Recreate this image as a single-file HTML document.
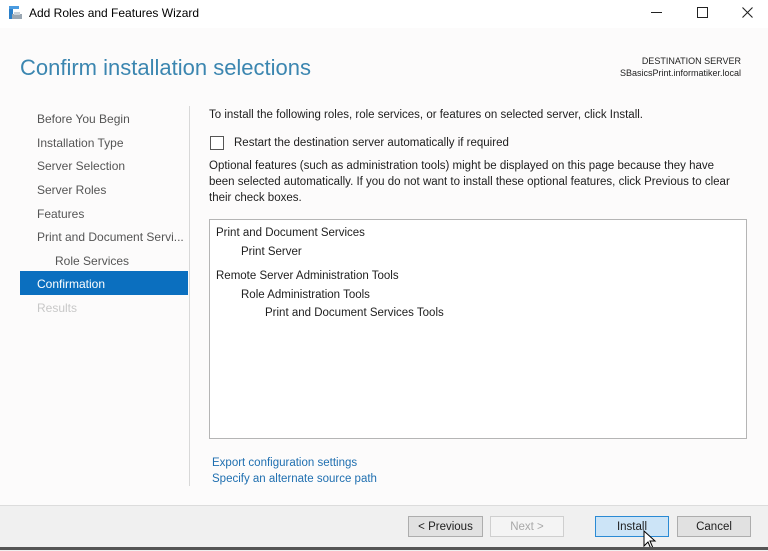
<!DOCTYPE html>
<html><head><style>
body{margin:0;width:768px;height:550px;overflow:hidden;background:#fcfbfb;font-family:"Liberation Sans",sans-serif;font-size:11.5px;color:#1e1e1e;position:relative}
.a{position:absolute;white-space:nowrap}
.nav{position:absolute;left:37px;color:#555;font-size:12px}
</style></head><body>
<div class="a" style="left:0;top:0;width:768px;height:28px;background:#fff"></div>
<svg class="a" style="left:7px;top:5px" width="16" height="16" viewBox="0 0 16 16"><rect x="2" y="1" width="4" height="13" fill="#2a7fc9"/><rect x="2" y="1" width="10" height="3" fill="#4a9be0"/><rect x="5" y="9" width="10" height="5" fill="#9aa7b3"/><rect x="7" y="7" width="6" height="3" fill="#c7d0d8"/></svg>
<div class="a" style="left:29px;top:6px;font-size:12px;color:#000">Add Roles and Features Wizard</div>
<div class="a" style="left:651px;top:12px;width:11px;height:1px;background:#222"></div>
<div class="a" style="left:697px;top:7px;width:9px;height:9px;border:1px solid #222"></div>
<svg class="a" style="left:742px;top:7px" width="11" height="11" viewBox="0 0 11 11"><path d="M0.5 0.5 L10.5 10.5 M10.5 0.5 L0.5 10.5" stroke="#222" stroke-width="1.1"/></svg>
<div class="a" style="left:20px;top:55px;font-size:22px;color:#3b86b0">Confirm installation selections</div>
<div class="a" style="right:27px;top:55px;font-size:9px;color:#222;text-align:right;line-height:12px">DESTINATION SERVER<br>SBasicsPrint.informatiker.local</div>
<div class="nav" style="top:112px">Before You Begin</div>
<div class="nav" style="top:136px">Installation Type</div>
<div class="nav" style="top:159px">Server Selection</div>
<div class="nav" style="top:183px">Server Roles</div>
<div class="nav" style="top:207px">Features</div>
<div class="nav" style="top:230px">Print and Document Servi...</div>
<div class="nav" style="top:254px;left:55px">Role Services</div>
<div class="a" style="left:20px;top:271px;width:168px;height:24px;background:#0b6fbf"></div>
<div class="nav" style="top:277px;color:#fff">Confirmation</div>
<div class="nav" style="top:301px;color:#c8c8c8">Results</div>
<div class="a" style="left:189px;top:106px;width:1px;height:380px;background:#d8d8d8"></div>
<div class="a" style="left:209px;top:109px">To install the following roles, role services, or features on selected server, click Install.</div>
<div class="a" style="left:210px;top:136px;width:12px;height:12px;border:1px solid #555;background:#fff"></div>
<div class="a" style="left:234px;top:137px">Restart the destination server automatically if required</div>
<div class="a" style="left:209px;top:158px;line-height:16px;white-space:normal;width:525px">Optional features (such as administration tools) might be displayed on this page because they have been selected automatically. If you do not want to install these optional features, click Previous to clear their check boxes.</div>
<div class="a" style="left:209px;top:219px;width:536px;height:218px;border:1px solid #b5b5b5;background:#fff"></div>
<div class="a" style="left:216px;top:227px">Print and Document Services</div>
<div class="a" style="left:241px;top:246px">Print Server</div>
<div class="a" style="left:216px;top:270px">Remote Server Administration Tools</div>
<div class="a" style="left:241px;top:289px">Role Administration Tools</div>
<div class="a" style="left:265px;top:307px">Print and Document Services Tools</div>
<div class="a" style="left:212px;top:457px;color:#1f6fb0">Export configuration settings</div>
<div class="a" style="left:212px;top:473px;color:#1f6fb0">Specify an alternate source path</div>
<div class="a" style="left:0;top:505px;width:768px;height:45px;background:#f0f0f0;border-top:1px solid #dcdcdc"></div>
<div class="a" style="left:408px;top:516px;width:73px;height:19px;border:1px solid #adadad;background:#e1e1e1;text-align:center;line-height:20px">&lt; Previous</div>
<div class="a" style="left:490px;top:516px;width:72px;height:19px;border:1px solid #cfcfcf;background:#f4f4f4;color:#a8a8a8;text-align:center;line-height:20px">Next &gt;</div>
<div class="a" style="left:595px;top:516px;width:72px;height:19px;border:1px solid #2a8ad4;background:#cce4f7;text-align:center;line-height:20px">Install</div>
<div class="a" style="left:677px;top:516px;width:72px;height:19px;border:1px solid #adadad;background:#e1e1e1;text-align:center;line-height:20px">Cancel</div>
<svg class="a" style="left:643px;top:530px" width="14" height="20" viewBox="0 0 14 20"><path d="M1 1 L1 16 L5 12 L8 19 L10 18 L7 11 L12 11 Z" fill="#fff" stroke="#000" stroke-width="1"/></svg>
<div class="a" style="left:0;top:547px;width:768px;height:3px;background:#555"></div>
</body></html>
